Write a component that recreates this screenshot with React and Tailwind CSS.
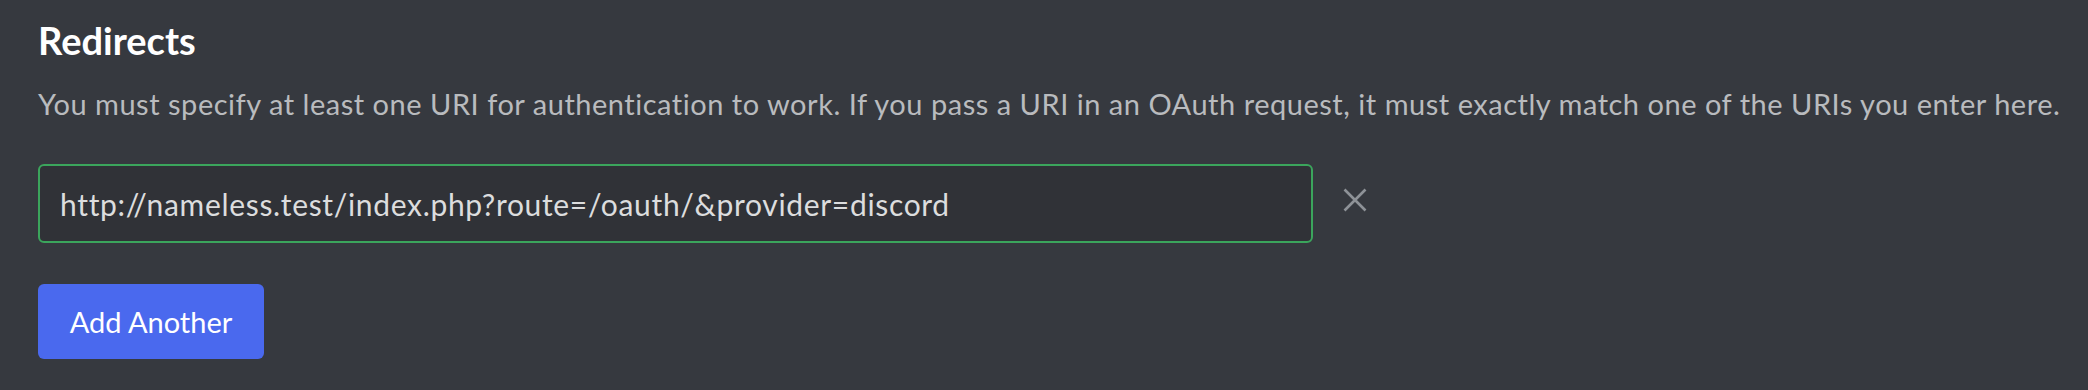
import React, { useState } from 'react';

const XIcon = () => (
  <svg width="24" height="24" viewBox="0 0 24 24" className="shrink-0">
    <path d="M1.5 1.5 L22.5 22.5 M22.5 1.5 L1.5 22.5" stroke="#8e9297" strokeWidth="2.6" fill="none" />
  </svg>
);

export default function App() {
  const [uris, setUris] = useState(['http://nameless.test/index.php?route=/oauth/&provider=discord']);

  return (
    <div className="w-full h-[390px] bg-[#36393f] pl-[38px] pt-4 font-['Lato',sans-serif] [font-variant-ligatures:none] overflow-hidden">
      <h2 className="text-[38px] leading-[48px] font-bold text-white">Redirects</h2>
      <p className="mt-5 text-[29px] leading-[40px] tracking-[0.52px] text-[#b9bbbe] whitespace-nowrap">
        You must specify at least one URI for authentication to work. If you pass a URI in an OAuth request, it must exactly match one of the URIs you enter here.
      </p>

      {uris.map((u, i) => (
        <div key={i} className="mt-10 flex items-center gap-[30px]">
          <div className="w-[1275px] h-[79px] rounded-md border-2 border-[#3ba55c] bg-[#303237] px-5 flex items-center">
            <span className="text-[30px] leading-[40px] tracking-[0.67px] text-[#dcddde] whitespace-nowrap">{u}</span>
          </div>
          <div className="-mt-[7px]">
            <XIcon />
          </div>
        </div>
      ))}

      <button
        onClick={() => setUris([...uris, ''])}
        className="mt-[41px] w-[226px] h-[75px] rounded-md bg-[#4a69ee] text-white text-[29px] leading-[40px] flex items-center justify-center"
      >
        Add Another
      </button>
    </div>
  );
}
